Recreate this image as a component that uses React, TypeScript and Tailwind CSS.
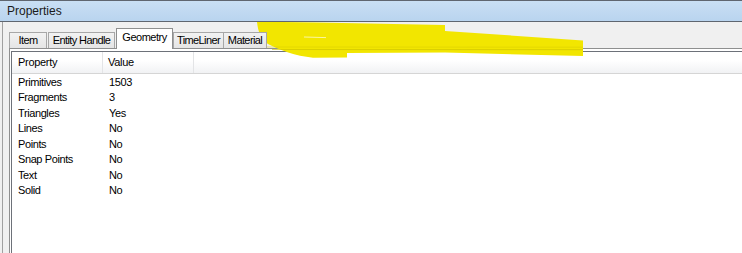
import * as React from "react";

type Row = { name: string; value: string };

const rows: Row[] = [
  { name: "Primitives", value: "1503" },
  { name: "Fragments", value: "3" },
  { name: "Triangles", value: "Yes" },
  { name: "Lines", value: "No" },
  { name: "Points", value: "No" },
  { name: "Snap Points", value: "No" },
  { name: "Text", value: "No" },
  { name: "Solid", value: "No" },
];

const tabs = [
  { label: "Item", w: "w-[38px]", ml: "ml-0" },
  { label: "Entity Handle", w: "w-[67px]", ml: "ml-[1px]" },
  { label: "Geometry", w: "w-[57px]", ml: "ml-[1px]", active: true },
  { label: "TimeLiner", w: "w-[51px]", ml: "ml-0" },
  { label: "Material", w: "w-[44px]", ml: "-ml-px" },
];

// yellow marker stroke drawn over the screenshot
function Highlighter() {
  return (
    <svg
      className="absolute left-0 top-0 pointer-events-none"
      width={742}
      height={253}
      viewBox="0 0 742 253"
    >
      <path
        d="M257,22 L283,22 L317,22.5 L445,25 L445,31 L583,40.5 L583,56 L445,52.5 L347,53 L347,57.5 L313,57.7 C295,56 280,50 268,44 C261,39 258,32 257,22 Z"
        fill="#f2e600"
      />
      <path d="M266,47 L583,47.2" stroke="#d8cd00" strokeWidth={1} opacity={0.5} />
      <path d="M272,49.5 L583,49.7" stroke="#c9bf00" strokeWidth={1} opacity={0.6} />
      <path d="M304,37 L326,37.6" stroke="#fbf6a0" strokeWidth={1} />
    </svg>
  );
}

export default function App() {
  return (
    <div className="relative w-[742px] h-[253px] overflow-hidden bg-[#f0f0f0] font-['Liberation_Sans',Arial,sans-serif] text-[11px] text-black flex flex-col">
      {/* title bar */}
      <div className="h-[22px] shrink-0 border-t border-b border-[#5f6670] bg-gradient-to-b from-[#c9dff4] to-[#b9d4ef] flex items-center pl-[7px] text-[12px] text-[#1a1a1a]">
        Properties
      </div>

      <div className="flex-1 ml-[2px] border-l border-[#a0a0a0] pl-[6px] pt-[6px] flex flex-col">
        {/* tabs */}
        <div className="flex items-end h-[20px] relative z-10">
          {tabs.map((t) =>
            t.active ? (
              <div
                key={t.label}
                className={`${t.w} ${t.ml} h-[21px] -mb-px border border-b-0 border-[#8e8f8f] bg-white flex items-center justify-center pb-[3px] tracking-[-0.5px]`}
              >
                {t.label}
              </div>
            ) : (
              <div
                key={t.label}
                className={`${t.w} ${t.ml} h-[16px] border border-b-0 border-[#a7a7a7] bg-gradient-to-b from-[#f2f2f2] to-[#e5e5e5] flex items-center justify-center tracking-[-0.6px]`}
              >
                {t.label}
              </div>
            )
          )}
        </div>

        {/* tab pane */}
        <div className="flex-1 border-t border-l border-[#8e8f8f] bg-white pt-[2px] pl-[1px] flex flex-col">
          <div className="flex-1 border-t border-l border-[#6d7179] bg-white flex flex-col">
            {/* header */}
            <div className="h-[22px] shrink-0 border-b border-[#d5d5d5] bg-gradient-to-b from-white from-40% to-[#f1f2f4] flex">
              <div className="w-[91px] flex items-center pl-[6px] border-r border-[#e3e4e6] tracking-[-0.3px]">
                Property
              </div>
              <div className="w-[91px] flex items-center pl-[5px] border-r border-[#e3e4e6] tracking-[-0.3px]">
                Value
              </div>
            </div>
            {/* rows */}
            <div className="flex flex-col">
              {rows.map((r) => (
                <div key={r.name} className="h-[15.5px] flex items-center tracking-[-0.4px]">
                  <div className="w-[91px] pl-[6px]">{r.name}</div>
                  <div className="pl-[6px]">{r.value}</div>
                </div>
              ))}
            </div>
          </div>
        </div>
      </div>

      <Highlighter />
    </div>
  );
}
